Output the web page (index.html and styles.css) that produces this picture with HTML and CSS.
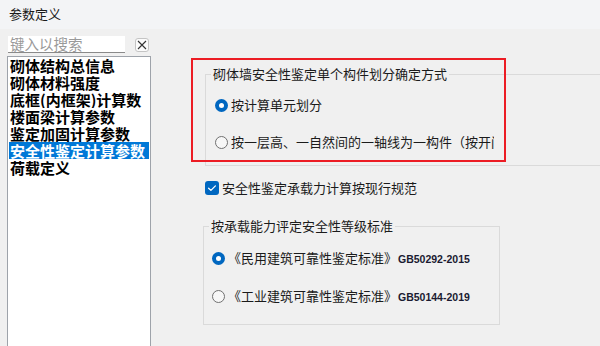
FILE: index.html
```html
<!DOCTYPE html>
<html lang="zh-CN">
<head>
<meta charset="utf-8">
<title>参数定义</title>
<link rel="stylesheet" href="styles.css">
</head>
<body>
<div class="window">
  <div class="titlebar">参数定义</div>
  <div class="main">
    <div class="left">
      <div class="search-row">
        <div class="search">键入以搜索</div>
        <div class="clear">
          <svg width="10" height="10" viewBox="0 0 10 10"><path d="M1 1L9 9M9 1L1 9" stroke="#333" stroke-width="1.1" fill="none"/></svg>
        </div>
      </div>
      <div class="list">
        <div class="item">砌体结构总信息</div>
        <div class="item">砌体材料强度</div>
        <div class="item">底框(内框架)计算数</div>
        <div class="item">楼面梁计算参数</div>
        <div class="item">鉴定加固计算参数</div>
        <div class="item selected">安全性鉴定计算参数</div>
        <div class="item">荷载定义</div>
      </div>
    </div>
    <div class="right">
      <fieldset class="group group-one">
        <legend>砌体墙安全性鉴定单个构件划分确定方式</legend>
        <div class="option first"><span class="radio on"></span><span class="label">按计算单元划分</span></div>
        <div class="option second"><span class="radio"></span><span class="label clip">按一层高、一自然间的一轴线为一构件（按开间划分）</span></div>
      </fieldset>
      <div class="check-row"><span class="checkbox"><svg width="14" height="14" viewBox="0 0 14 14"><path d="M3.6 7.2L5.9 9.4L10.4 4.9" stroke="#fff" stroke-width="1.3" fill="none" stroke-linecap="round" stroke-linejoin="round"/></svg></span><span class="label">安全性鉴定承载力计算按现行规范</span></div>
      <fieldset class="group group-two">
        <legend>按承载能力评定安全性等级标准</legend>
        <div class="option first"><span class="radio on"></span><span class="label">《民用建筑可靠性鉴定标准》<span class="code">GB50292-2015</span></span></div>
        <div class="option second"><span class="radio"></span><span class="label">《工业建筑可靠性鉴定标准》<span class="code">GB50144-2019</span></span></div>
      </fieldset>
      <div class="highlight-box"></div>
    </div>
  </div>
</div>
</body>
</html>
```
FILE: styles.css
```css
html, body {
  margin: 0;
  padding: 0;
}
body {
  width: 600px;
  height: 346px;
  overflow: hidden;
  background: #f0f0f0;
  font-family: "Noto Sans CJK SC", "Noto Sans", sans-serif;
  color: #1b1b1b;
}
.window {
  width: 600px;
  height: 346px;
  display: flex;
  flex-direction: column;
}
.titlebar {
  height: 29px;
  line-height: 28px;
  padding-left: 9px;
  font-size: 13px;
  background: #f3f4f6;
  color: #1a1a1a;
  flex: none;
}
.main {
  flex: 1;
  display: flex;
  min-height: 0;
}
.left {
  width: 184px;
  flex: none;
  padding: 7px 0 0 7px;
  display: flex;
  flex-direction: column;
}
.search-row {
  display: flex;
  align-items: center;
  height: 17px;
  padding-left: 1px;
}
.search {
  width: 117px;
  height: 17px;
  box-sizing: border-box;
  background: #fff;
  border-bottom: 1px solid #8a8a8a;
  color: #9a9a9a;
  font-size: 14.5px;
  line-height: 16px;
  padding-left: 2px;
  white-space: nowrap;
  overflow: hidden;
}
.clear {
  margin-left: 10px;
  width: 14px;
  height: 14px;
  box-sizing: border-box;
  border: 1px solid #c4c4c4;
  border-radius: 3px;
  background: #fbfbfb;
  display: flex;
  align-items: center;
  justify-content: center;
}
.clear svg {
  display: block;
}
.list {
  margin-top: 3px;
  width: 144px;
  flex: 1;
  box-sizing: border-box;
  border: 1px solid #9ea3aa;
  border-bottom: none;
  background: #fff;
  padding: 0 1px;
}
.item {
  height: 17px;
  line-height: 17px;
  font-size: 15px;
  font-weight: 700;
  color: #000;
  padding-left: 1px;
  white-space: nowrap;
  overflow: hidden;
}
.item.selected {
  background: #0078d7;
  color: #fff;
}
.right {
  flex: 1;
  position: relative;
  overflow: hidden;
}
.group {
  margin: 0;
  border: 1px solid #dadada;
  padding: 0 0 0 5px;
  font-size: 13px;
}
.group legend {
  padding: 0 2px;
  line-height: 16px;
  font-size: 13px;
  color: #1b1b1b;
}
.group-one {
  margin: 37px 0 0 14px;
  width: 420px;
  flex: none;
  padding-bottom: 13px;
}
.group-two {
  margin: 20px 0 0 12px;
  width: 297px;
  box-sizing: border-box;
  padding-bottom: 18px;
}
.option {
  height: 20px;
  display: flex;
  align-items: center;
  white-space: nowrap;
  font-size: 13px;
}
.group-one .option.first { margin-top: 13px; }
.group-one .option.second { margin-top: 17px; }
.group-one .radio { margin-left: 3.5px; margin-right: 3.5px; }
.group-two .option.first { margin-top: 14px; }
.group-two .option.second { margin-top: 18px; }
.group-two .radio { margin-left: 2.5px; margin-right: 3.5px; }
.radio {
  width: 13px;
  height: 13px;
  box-sizing: border-box;
  border-radius: 50%;
  border: 1px solid #707070;
  background: #f7f7f7;
  flex: none;
  display: flex;
  align-items: center;
  justify-content: center;
}
.radio.on {
  border: none;
  background: #0067c0;
}
.radio.on::after {
  content: "";
  width: 5px;
  height: 5px;
  border-radius: 50%;
  background: #fff;
}
.label {
  line-height: 20px;
}
.label.clip {
  width: 262.5px;
  overflow: hidden;
}
.code {
  font-family: "Liberation Sans", Arial, sans-serif;
  font-size: 10.5px;
  font-weight: 700;
  color: #1a1a30;
  margin-left: 1px;
}
.check-row {
  margin: 12px 0 0 14px;
  height: 20px;
  display: flex;
  align-items: center;
  font-size: 13px;
  white-space: nowrap;
}
.checkbox {
  width: 14px;
  height: 14px;
  border-radius: 3px;
  background: #0067c0;
  margin-right: 3px;
  flex: none;
}
.checkbox svg {
  display: block;
}
.highlight-box {
  position: absolute;
  left: 0;
  top: 29px;
  width: 315px;
  height: 104px;
  box-sizing: border-box;
  border: 2px solid #ec1c24;
  pointer-events: none;
}
```
